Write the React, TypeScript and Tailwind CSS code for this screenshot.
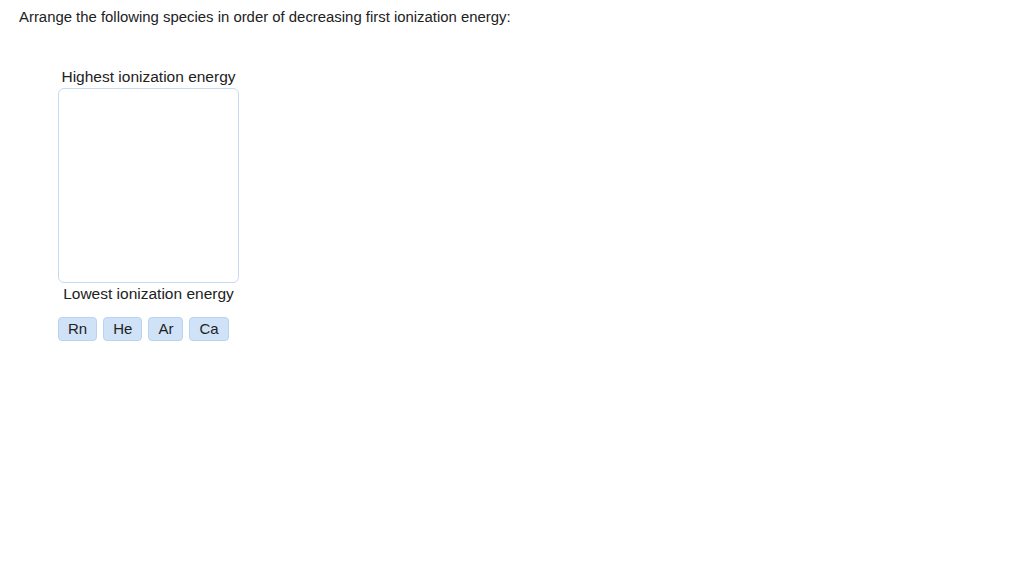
import React from 'react'

const species = ['Rn', 'He', 'Ar', 'Ca']

export default function App() {
  return (
    <div className="min-h-[576px] w-[1024px] bg-white text-[#222] font-['Liberation_Sans',Arial,sans-serif]">
      <p className="pl-[19px] pt-[8px] text-[14.9px] leading-[18px]">
        Arrange the following species in order of decreasing first ionization energy:
      </p>

      <div className="ml-[58px] mt-[42px] flex w-[181px] flex-col items-center">
        <div className="text-[15.5px] leading-[18px]">Highest ionization energy</div>
        {/* drop zone */}
        <div className="mt-[2px] h-[195px] w-[181px] rounded-[6px] border border-[#c5dbf2]" />
        <div className="mt-[2px] text-[15.5px] leading-[18px]">Lowest ionization energy</div>
      </div>

      <div className="ml-[58px] mt-[14px] flex gap-[6px]">
        {species.map((s) => (
          <div
            key={s}
            className="flex h-[24px] items-center rounded-[4px] border border-[#b9d3ee] bg-[#cfe2f7] px-[9px] text-[15px] leading-[18px]"
          >
            {s}
          </div>
        ))}
      </div>
    </div>
  )
}
